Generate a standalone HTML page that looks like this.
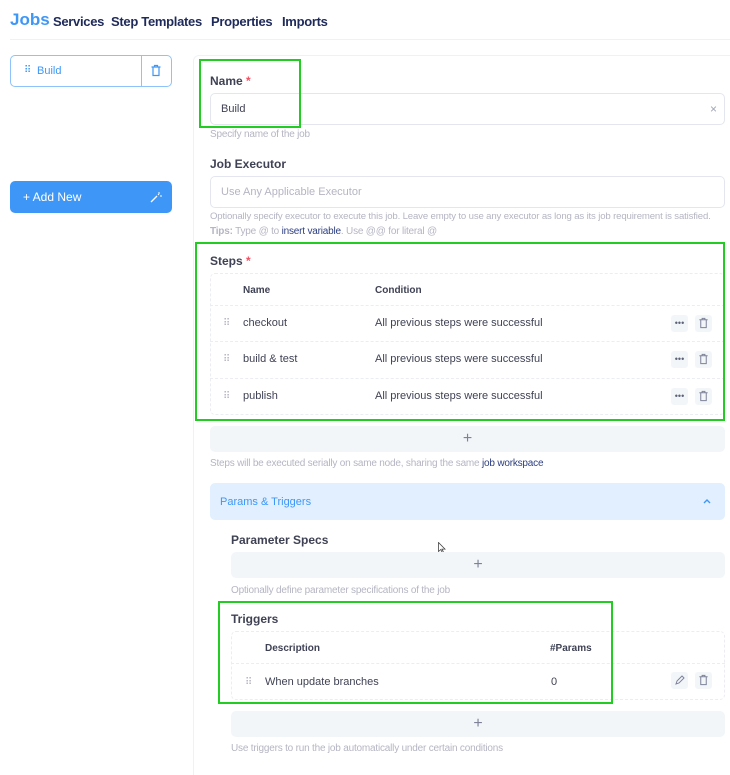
<!DOCTYPE html>
<html><head><style>
*{box-sizing:border-box;margin:0;padding:0}
body{width:730px;height:760px;overflow:hidden;background:#fff;font-family:"Liberation Sans",sans-serif;position:relative;color:#3f4254}
.a{position:absolute;white-space:nowrap}
.nav{font-weight:bold;color:#1e2a5a;font-size:13px;top:14px;letter-spacing:-0.3px}
.lbl{font-size:12px;color:#3f4254;font-weight:bold}
.help{font-size:10px;color:#b5b5c3;letter-spacing:-0.2px}
.inp{position:absolute;border:1px solid #e4e6ef;border-radius:5px;background:#fff}
.bar{position:absolute;background:#f3f6f9;border-radius:5px;text-align:center;color:#7e8299;font-size:16px}
.tbl{position:absolute;border:1px dashed #ebedf3;border-radius:5px}
.sep{position:absolute;border-top:1px dashed #ebedf3}
.cell{font-size:11px;color:#3f4254}
.hd{font-size:10px;color:#3f4254;font-weight:bold}
.btn{position:absolute;width:17px;height:17px;background:#f3f6f9;border-radius:3px;color:#5e6278;font-size:9px;text-align:center;line-height:16px}
.btn svg{position:absolute;left:3px;top:2px}
.green{position:absolute;border:2px solid #22cc22}
.drag{font-size:10px;color:#b5b5c3;letter-spacing:-1px}
a{color:#2c3e80;text-decoration:none}
</style></head><body>
<svg width="0" height="0" style="position:absolute"><defs><symbol id="tr" viewBox="0 0 12 13"><path d="M1.5 3h9M4.5 3V1.5h3V3M3 3v8.5h6V3" fill="none" stroke="#7e8299" stroke-width="1.1"/></symbol></defs></svg>
<div class="a" style="left:10px;top:10px;font-size:17px;font-weight:bold;color:#3e97f7">Jobs</div>
<div class="a nav" style="left:53px">Services</div>
<div class="a nav" style="left:111px">Step Templates</div>
<div class="a nav" style="left:211px">Properties</div>
<div class="a nav" style="left:282px">Imports</div>
<div class="a" style="left:10px;top:39px;width:720px;border-top:1px solid #eff2f5"></div>

<div class="a" style="left:10px;top:55px;width:162px;height:32px;border:1px solid #8dc3fa;border-radius:5px"></div>
<div class="a" style="left:141px;top:56px;height:30px;border-left:1px solid #8dc3fa"></div>
<div class="a drag" style="left:24px;top:65px;color:#3e97f7">⠿</div>
<div class="a" style="left:37px;top:65px;font-size:11px;color:#3e97f7">Build</div>
<svg class="a" style="left:150px;top:64px" width="12" height="13" viewBox="0 0 12 13"><path d="M1.5 3h9M4.5 3V1.5h3V3M3 3v8.5h6V3" fill="none" stroke="#3e97f7" stroke-width="1.2"/></svg>

<div class="a" style="left:10px;top:181px;width:162px;height:32px;background:#3e97f7;border-radius:5px"></div>
<div class="a" style="left:23px;top:190px;font-size:12px;color:#fff">+ Add New</div>
<svg class="a" style="left:150px;top:191px" width="12" height="12" viewBox="0 0 12 12"><path d="M1 11L7 5" stroke="#fff" stroke-width="1.3"/><path d="M9 1v2M10 5h2M8 4l1-1" stroke="#fff" stroke-width="1"/></svg>

<div class="a" style="left:193px;top:55px;width:560px;height:720px;border-left:1px solid #eff2f5;border-top:1px solid #eff2f5;border-top-left-radius:6px"></div>

<div class="a lbl" style="left:210px;top:74px">Name <span style="color:#f64e60">*</span></div>
<div class="inp" style="left:210px;top:93px;width:515px;height:32px"></div>
<div class="a cell" style="left:221px;top:103px">Build</div>
<div class="a" style="left:710px;top:102px;font-size:12px;color:#a1a5b7">×</div>
<div class="a help" style="left:210px;top:129px">Specify name of the job</div>

<div class="a lbl" style="left:210px;top:157px">Job Executor</div>
<div class="inp" style="left:210px;top:176px;width:515px;height:32px"></div>
<div class="a" style="left:221px;top:186px;font-size:11px;color:#b5b5c3">Use Any Applicable Executor</div>
<div class="a help" style="left:210px;top:211px;font-size:9.6px;letter-spacing:-0.15px">Optionally specify executor to execute this job. Leave empty to use any executor as long as its job requirement is satisfied.</div>
<div class="a help" style="left:210px;top:226px"><b>Tips:</b> Type @ to <a>insert variable</a>. Use @@ for literal @</div>

<div class="a lbl" style="left:210px;top:254px">Steps <span style="color:#f64e60">*</span></div>
<div class="tbl" style="left:210px;top:273px;width:515px;height:142px"></div>
<div class="a hd" style="left:243px;top:285px">Name</div>
<div class="a hd" style="left:375px;top:285px">Condition</div>
<div class="sep" style="left:210px;top:305px;width:515px"></div>
<div class="sep" style="left:210px;top:341px;width:515px"></div>
<div class="sep" style="left:210px;top:378px;width:515px"></div>

<div class="a drag" style="left:223px;top:318px">⠿</div><div class="a cell" style="left:243px;top:317px">checkout</div><div class="a cell" style="left:375px;top:317px">All previous steps were successful</div>
<div class="a drag" style="left:223px;top:354px">⠿</div><div class="a cell" style="left:243px;top:353px">build &amp; test</div><div class="a cell" style="left:375px;top:353px">All previous steps were successful</div>
<div class="a drag" style="left:223px;top:391px">⠿</div><div class="a cell" style="left:243px;top:390px">publish</div><div class="a cell" style="left:375px;top:390px">All previous steps were successful</div>
<div class="btn" style="left:671px;top:315px">•••</div><div class="btn" style="left:695px;top:315px"><svg width="11" height="12"><use href="#tr"/></svg></div>
<div class="btn" style="left:671px;top:351px">•••</div><div class="btn" style="left:695px;top:351px"><svg width="11" height="12"><use href="#tr"/></svg></div>
<div class="btn" style="left:671px;top:388px">•••</div><div class="btn" style="left:695px;top:388px"><svg width="11" height="12"><use href="#tr"/></svg></div>

<div class="bar" style="left:210px;top:426px;width:515px;height:26px;line-height:26px">+</div>
<div class="a help" style="left:210px;top:458px">Steps will be executed serially on same node, sharing the same <a>job workspace</a></div>

<div class="a" style="left:210px;top:483px;width:515px;height:37px;background:#e1effe;border-radius:5px"></div>
<div class="a" style="left:220px;top:496px;font-size:11px;color:#3e97f7">Params &amp; Triggers</div>
<svg class="a" style="left:703px;top:498px" width="8" height="6" viewBox="0 0 8 6"><path d="M1 5l3-3 3 3" fill="none" stroke="#3e97f7" stroke-width="1.4"/></svg>

<div class="a lbl" style="left:231px;top:533px">Parameter Specs</div>
<svg class="a" style="left:438px;top:542px" width="8" height="12" viewBox="0 0 8 12"><path d="M0.5 0.5v9l2.3-2 1.6 3.5 1.2-.6-1.600-3.3h3z" fill="#fff" stroke="#444" stroke-width="0.8"/></svg>
<div class="bar" style="left:231px;top:552px;width:494px;height:26px;line-height:26px">+</div>
<div class="a help" style="left:231px;top:585px">Optionally define parameter specifications of the job</div>

<div class="a lbl" style="left:231px;top:612px">Triggers</div>
<div class="tbl" style="left:231px;top:631px;width:494px;height:69px"></div>
<div class="a hd" style="left:265px;top:643px">Description</div>
<div class="a hd" style="left:550px;top:643px">#Params</div>
<div class="sep" style="left:231px;top:663px;width:494px"></div>
<div class="a drag" style="left:245px;top:677px">⠿</div>
<div class="a cell" style="left:265px;top:676px">When update branches</div>
<div class="a cell" style="left:551px;top:676px">0</div>
<div class="btn" style="left:671px;top:672px"><svg width="11" height="12" viewBox="0 0 11 12"><path d="M2 10l1-3 5-5 2 2-5 5z" fill="none" stroke="#7e8299" stroke-width="1"/></svg></div><div class="btn" style="left:695px;top:672px"><svg width="11" height="12"><use href="#tr"/></svg></div>

<div class="bar" style="left:231px;top:711px;width:494px;height:26px;line-height:26px">+</div>
<div class="a help" style="left:231px;top:743px">Use triggers to run the job automatically under certain conditions</div>

<div class="green" style="left:199px;top:59px;width:102px;height:69px"></div>
<div class="green" style="left:195px;top:242px;width:530px;height:179px"></div>
<div class="green" style="left:218px;top:601px;width:395px;height:103px"></div>
</body></html>
